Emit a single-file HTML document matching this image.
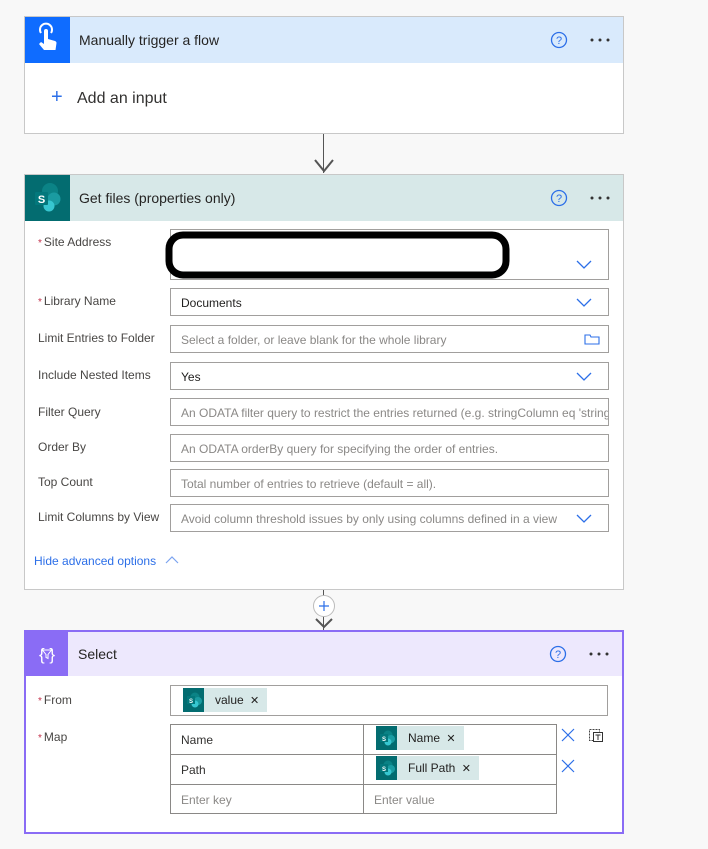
<!DOCTYPE html>
<html><head><meta charset="utf-8">
<style>
*{box-sizing:border-box;margin:0;padding:0}
body{width:708px;height:849px;background:#f8f8f8;font-family:"Liberation Sans",sans-serif;position:relative;overflow:hidden;color:#323130}
.a{position:absolute}
.card{position:absolute;left:24px;width:600px;background:#fff;border:1px solid #c8c8c8}
.hdr{position:absolute;left:0;top:0;right:0;height:46px}
.ico{position:absolute;left:0;top:0;width:45px;height:46px}
.title{position:absolute;left:54px;top:15px;font-size:14px;color:#252423}
.help{position:absolute;left:525px;top:14px}
.dots{position:absolute;left:564px;top:20px}
.lbl{position:absolute;left:13px;font-size:12px;color:#484644}
.req{color:#c4314b;font-size:10px;margin-right:2px}
.in{position:absolute;left:145px;width:439px;height:28px;border:1px solid #a19f9d;font-size:12px;padding:7px 10px;color:#201f1e;white-space:nowrap;overflow:hidden}
.ph{color:#8a8886}
.chev{position:absolute;right:16px;top:9px}
.tok{display:inline-block;position:absolute;height:24px;background:#d7e8e8;font-size:12px;line-height:24px;color:#201f1e;padding-left:32px;padding-right:8px;white-space:nowrap}
.tok .ti{position:absolute;left:0;top:0;width:21px;height:24px;background:#036c70}
.cell{position:absolute;border:1px solid #8a8886;font-size:12px;padding:8px 10px;height:31px}
</style></head><body>

<!-- card 1 -->
<div class="card" style="top:16px;height:118px">
 <div class="hdr" style="background:#d9eafc"></div>
 <div class="ico" style="background:#0f6cff">
  <svg width="45" height="46" viewBox="0 0 45 46"><path d="M16 16a6 6 0 1 1 10 0" fill="none" stroke="#fff" stroke-width="2"/><path d="M19 14a2 2 0 0 1 4 0v8l7 2c1 .5 1.5 1 1.5 2l-1 7H19l-5-6 2-2 3 2z" fill="#fff"/></svg>
 </div>
 <div class="title">Manually trigger a flow</div>
 <svg class="help" width="18" height="18"><circle cx="9" cy="9" r="7.5" fill="none" stroke="#2c6fe8" stroke-width="1.3"/><text x="9" y="13" font-size="11" text-anchor="middle" fill="#2c6fe8" font-family="Liberation Sans">?</text></svg>
 <svg class="dots" width="24" height="6"><circle cx="3" cy="3" r="1.5" fill="#333"/><circle cx="11" cy="3" r="1.5" fill="#333"/><circle cx="19" cy="3" r="1.5" fill="#333"/></svg>
 <div class="a" style="left:26px;top:70px;font-size:20px;color:#2c6fe8;line-height:20px">+</div>
 <div class="a" style="left:52px;top:73px;font-size:16px;color:#323130">Add an input</div>
</div>

<!-- connector 1 -->
<div class="a" style="left:323px;top:134px;width:1px;height:39px;background:#555"></div>
<svg class="a" style="left:313px;top:158px" width="22" height="16"><path d="M2 2l9 11 9-11" fill="none" stroke="#555" stroke-width="2"/></svg>

<!-- card 2 -->
<div class="card" style="top:174px;height:416px">
 <div class="hdr" style="background:#d7e8e8"></div>
 <div class="ico" style="background:#036c70">
  <svg width="45" height="46" viewBox="0 0 45 46"><circle cx="25" cy="16" r="8" fill="#0b8386"/><circle cx="29" cy="24" r="6.5" fill="#1a9ba1"/><circle cx="24" cy="31" r="5.5" fill="#37c6d0"/><rect x="10" y="17" width="13" height="13" rx="1" fill="#03787c"/><text x="16.5" y="28" font-size="11" font-weight="bold" fill="#fff" text-anchor="middle" font-family="Liberation Sans">S</text></svg>
 </div>
 <div class="title">Get files (properties only)</div>
 <svg class="help" width="18" height="18"><circle cx="9" cy="9" r="7.5" fill="none" stroke="#2c6fe8" stroke-width="1.3"/><text x="9" y="13" font-size="11" text-anchor="middle" fill="#2c6fe8" font-family="Liberation Sans">?</text></svg>
 <svg class="dots" width="24" height="6"><circle cx="3" cy="3" r="1.5" fill="#333"/><circle cx="11" cy="3" r="1.5" fill="#333"/><circle cx="19" cy="3" r="1.5" fill="#333"/></svg>

 <div class="lbl" style="top:60px"><span class="req">*</span>Site Address</div>
 <div class="in" style="top:54px;height:51px"><svg class="chev" style="top:30px" width="16" height="10"><path d="M1 1l7 7 7-7" fill="none" stroke="#2c6fe8" stroke-width="1.3"/></svg></div>
 <svg class="a" style="left:140px;top:54px" width="350" height="52"><rect x="4" y="6" width="337" height="40" rx="14" fill="none" stroke="#000" stroke-width="7"/></svg>

 <div class="lbl" style="top:119px"><span class="req">*</span>Library Name</div>
 <div class="in" style="top:113px">Documents<svg class="chev" width="16" height="10"><path d="M1 1l7 7 7-7" fill="none" stroke="#2c6fe8" stroke-width="1.3"/></svg></div>

 <div class="lbl" style="top:156px">Limit Entries to Folder</div>
 <div class="in" style="top:150px"><span class="ph">Select a folder, or leave blank for the whole library</span><svg class="chev" style="top:7px;right:8px" width="16" height="12"><path d="M1 2h5l1 2h8v7H1z" fill="none" stroke="#2c6fe8" stroke-width="1.1"/></svg></div>

 <div class="lbl" style="top:193px">Include Nested Items</div>
 <div class="in" style="top:187px">Yes<svg class="chev" width="16" height="10"><path d="M1 1l7 7 7-7" fill="none" stroke="#2c6fe8" stroke-width="1.3"/></svg></div>

 <div class="lbl" style="top:230px">Filter Query</div>
 <div class="in" style="top:223px"><span class="ph">An ODATA filter query to restrict the entries returned (e.g. stringColumn eq 'string'</span></div>

 <div class="lbl" style="top:265px">Order By</div>
 <div class="in" style="top:259px"><span class="ph">An ODATA orderBy query for specifying the order of entries.</span></div>

 <div class="lbl" style="top:300px">Top Count</div>
 <div class="in" style="top:294px"><span class="ph">Total number of entries to retrieve (default = all).</span></div>

 <div class="lbl" style="top:335px">Limit Columns by View</div>
 <div class="in" style="top:329px"><span class="ph">Avoid column threshold issues by only using columns defined in a view</span><svg class="chev" width="16" height="10"><path d="M1 1l7 7 7-7" fill="none" stroke="#2c6fe8" stroke-width="1.3"/></svg></div>

 <div class="a" style="left:9px;top:379px;font-size:12px;color:#2c6fe8">Hide advanced options</div>
 <svg class="a" style="left:140px;top:380px" width="14" height="9"><path d="M1 8l6-6 6 6" fill="none" stroke="#7ba3f0" stroke-width="1.2"/></svg>
</div>

<!-- connector 2 -->
<div class="a" style="left:323px;top:590px;width:1px;height:40px;background:#555"></div>
<div class="a" style="left:313px;top:595px;width:22px;height:22px;border-radius:50%;background:#fff;border:1px solid #bbb"></div>
<svg class="a" style="left:313px;top:595px" width="22" height="22"><path d="M11 6v10M6 11h10" stroke="#2c6fe8" stroke-width="1.2"/></svg>
<svg class="a" style="left:314px;top:617px" width="20" height="12"><path d="M2 2l8 8 8-8" fill="none" stroke="#555" stroke-width="2"/></svg>

<!-- card 3 -->
<div class="card" style="top:630px;height:204px;border:2px solid #8a6cf5">
 <div class="hdr" style="background:#ede8fd;height:44px"></div>
 <div class="ico" style="background:#8a6cf5;width:42px;height:44px">
  <svg width="42" height="44"><text x="21" y="28" font-size="17" fill="#fff" text-anchor="middle" font-family="Liberation Sans">{  }</text><path d="M16.5 18h9l-3.5 4.5v4l-2-1v-3z" fill="none" stroke="#fff" stroke-width="1"/></svg>
 </div>
 <div class="title" style="left:52px;top:14px">Select</div>
 <svg class="help" style="left:523px;top:13px" width="18" height="18"><circle cx="9" cy="9" r="7.5" fill="none" stroke="#2c6fe8" stroke-width="1.3"/><text x="9" y="13" font-size="11" text-anchor="middle" fill="#2c6fe8" font-family="Liberation Sans">?</text></svg>
 <svg class="dots" style="left:562px;top:19px" width="24" height="6"><circle cx="3" cy="3" r="1.5" fill="#333"/><circle cx="11" cy="3" r="1.5" fill="#333"/><circle cx="19" cy="3" r="1.5" fill="#333"/></svg>

 <div class="lbl" style="top:61px;left:12px"><span class="req">*</span>From</div>
 <div class="in" style="left:144px;top:53px;width:438px;height:31px;padding:0">
  <div class="tok" style="left:12px;top:2px"><div class="ti"><svg width="21" height="24"><circle cx="12" cy="9" r="4.5" fill="#0b8386"/><circle cx="15" cy="13" r="4" fill="#1a9ba1"/><circle cx="12" cy="16" r="3.5" fill="#37c6d0"/><rect x="4" y="8" width="8" height="8" fill="#03787c"/><text x="8" y="15" font-size="6" font-weight="bold" fill="#fff" text-anchor="middle" font-family="Liberation Sans">S</text></svg></div>value <span style="font-size:11px;margin-left:3px">✕</span></div>
 </div>

 <div class="lbl" style="top:98px;left:12px"><span class="req">*</span>Map</div>
 <div class="cell" style="left:144px;top:92px;width:194px">Name</div>
 <div class="cell" style="left:337px;top:92px;width:194px;padding:0"><div class="tok" style="left:12px;top:1px"><div class="ti"><svg width="21" height="24"><circle cx="12" cy="9" r="4.5" fill="#0b8386"/><circle cx="15" cy="13" r="4" fill="#1a9ba1"/><circle cx="12" cy="16" r="3.5" fill="#37c6d0"/><rect x="4" y="8" width="8" height="8" fill="#03787c"/><text x="8" y="15" font-size="6" font-weight="bold" fill="#fff" text-anchor="middle" font-family="Liberation Sans">S</text></svg></div>Name <span style="font-size:11px;margin-left:3px">✕</span></div></div>
 <div class="cell" style="left:144px;top:122px;width:194px">Path</div>
 <div class="cell" style="left:337px;top:122px;width:194px;padding:0"><div class="tok" style="left:12px;top:1px"><div class="ti"><svg width="21" height="24"><circle cx="12" cy="9" r="4.5" fill="#0b8386"/><circle cx="15" cy="13" r="4" fill="#1a9ba1"/><circle cx="12" cy="16" r="3.5" fill="#37c6d0"/><rect x="4" y="8" width="8" height="8" fill="#03787c"/><text x="8" y="15" font-size="6" font-weight="bold" fill="#fff" text-anchor="middle" font-family="Liberation Sans">S</text></svg></div>Full Path <span style="font-size:11px;margin-left:3px">✕</span></div></div>
 <div class="cell ph" style="left:144px;top:152px;width:194px;height:30px">Enter key</div>
 <div class="cell ph" style="left:337px;top:152px;width:194px;height:30px">Enter value</div>

 <svg class="a" style="left:535px;top:96px" width="14" height="14"><path d="M1 1l12 12M13 1L1 13" stroke="#2c6fe8" stroke-width="1.2"/></svg>
 <svg class="a" style="left:535px;top:127px" width="14" height="14"><path d="M1 1l12 12M13 1L1 13" stroke="#2c6fe8" stroke-width="1.2"/></svg>
 <svg class="a" style="left:562px;top:95px" width="16" height="16"><rect x="1.5" y="2.5" width="10" height="11" fill="none" stroke="#444" stroke-dasharray="2 1"/><rect x="5.5" y="5.5" width="9" height="9" fill="#fff" stroke="#333"/><path d="M7.5 8h5M10 8v5" stroke="#333"/></svg>
</div>
</body></html>
